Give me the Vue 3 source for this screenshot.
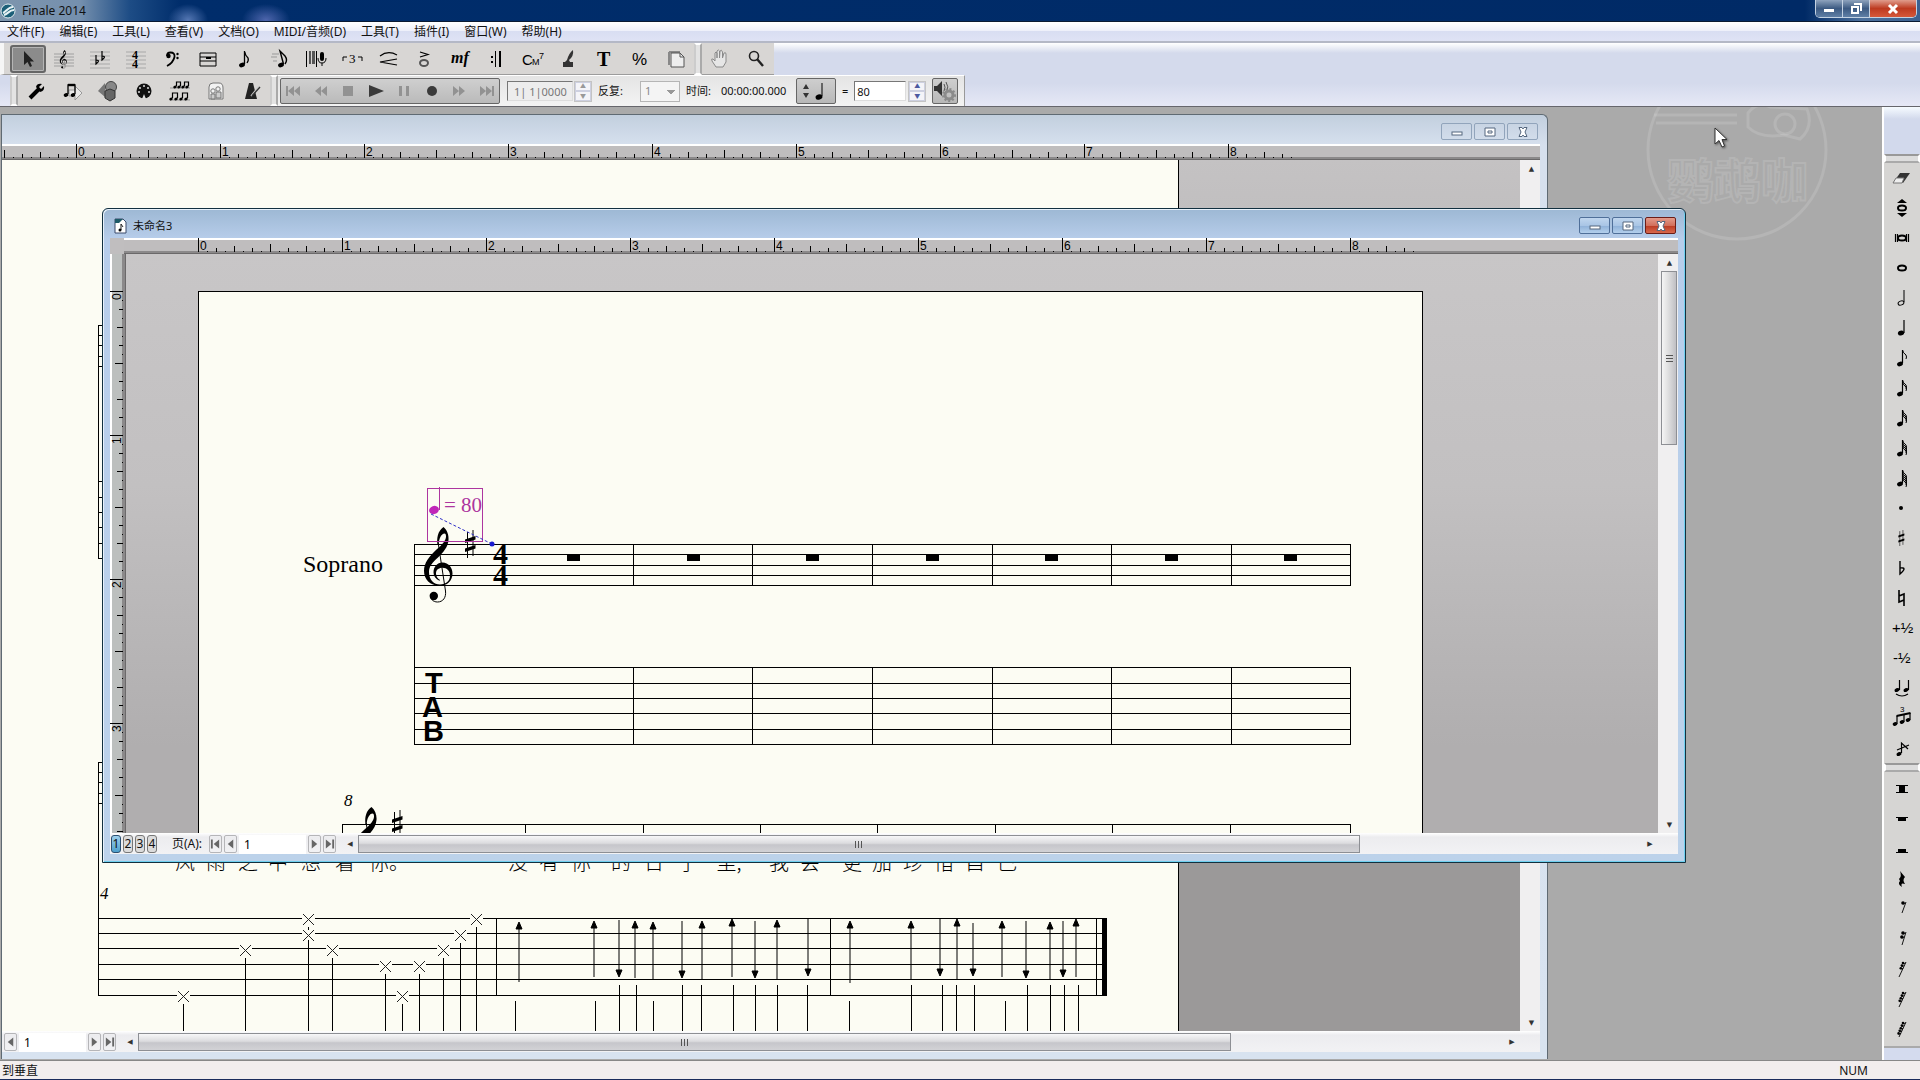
<template>
  <div class="app">
    <svg class="defs" aria-hidden="true">
      <symbol id="clef" viewBox="0 0 30 76">
        <path d="M19.5 0C23 3 25 8 24.5 13C24 20 19.500 25 14 30.500C8.500 35.500 5 39 5 45C5 53 10 57.500 16 57.500C22 57.500 26 54 26 48.500C26 44 23 40.800 18.500 40.800C14.500 40.800 12 43 12 46.500C12 49 13.500 51.500 16 53L15.500 53.800C11.500 52 9.500 49 9.500 45.500C9.500 40 13 35.500 18.500 35.500C24.500 35.500 28.500 40.500 28.500 46.500C28.500 54 23 58.800 15.500 58.800C6 58.800 0 52 0 44C0 36 5 29.500 12 23C18.500 17.500 22 13.500 22 9.500C22 7.500 21.500 6.500 20.500 6.500C17.500 6.500 14.500 12 14.800 18L13.600 18C12.500 12 13.500 4 19.500 0Z" />
        <path d="M14.200 16L21.500 64C22.300 70.500 19 75 13.500 75C9 75 6.500 72 6.500 69" fill="none" stroke="#000" stroke-width="1" />
        <circle cx="9.800" cy="69" r="4.200" />
      </symbol>
      <symbol id="sharp" viewBox="0 0 11 28">
        <path d="M2.500 2V28M8 0V26" stroke="#000" stroke-width="1" />
        <path d="M0 9.500L10.500 6V9.500L0 13ZM0 18.500L10.500 15V18.500L0 22Z" />
      </symbol>
    </svg>

    <header class="titlebar">
      <svg class="app-logo" viewBox="0 0 16 16">
        <circle cx="8" cy="8" r="7" fill="#1c5f78" stroke="#dfe9ee" />
        <path d="M3 10C6 9 8 4 13 4M4 12C8 11 9 7 14 7" stroke="#e6f2f5" stroke-width="2" fill="none" />
      </svg>
      <h1>Finale 2014</h1>
      <div class="sys-buttons">
        <button aria-label="最小化"><svg viewBox="0 0 16 12"><rect x="3" y="6" width="10" height="3" fill="#fff" /></svg></button>
        <button aria-label="还原"><svg viewBox="0 0 16 12"><path d="M6 1H13V8M4 4H10V10H4Z" fill="none" stroke="#fff" stroke-width="2" /></svg></button>
        <button class="close" aria-label="关闭"><svg viewBox="0 0 16 12"><path d="M4 2L12 10M12 2L4 10" stroke="#fff" stroke-width="3" /></svg></button>
      </div>
    </header>

    <nav class="menubar">
      <button v-for="item in menus" :key="item">{{ item }}</button>
    </nav>

    <div class="toolbars">
      <div class="toolbar-row">
        <div class="tool-panel first">
          <button
            v-for="(tool, index) in mainTools"
            :key="tool.name"
            class="tool"
            :class="{ active: index === activeTool }"
            :aria-label="tool.name"
            @click="activeTool = index"
          >
            <svg viewBox="0 0 24 24" v-html="tool.icon"></svg>
          </button>
        </div>
        <i class="grip"></i>
        <div class="tool-panel">
          <button v-for="tool in navTools" :key="tool.name" class="tool" :aria-label="tool.name">
            <svg viewBox="0 0 24 24" v-html="tool.icon"></svg>
          </button>
        </div>
      </div>
      <div class="toolbar-row second">
        <i class="grip"></i>
        <div class="tool-panel">
          <button v-for="tool in extraTools" :key="tool.name" class="tool" :aria-label="tool.name">
            <svg viewBox="0 0 24 24" v-html="tool.icon"></svg>
          </button>
        </div>
        <i class="grip"></i>
        <div class="playback">
          <div class="transport">
            <button v-for="item in transport" :key="item.name" :aria-label="item.name">
              <svg viewBox="0 0 20 16"><path :d="item.d" :fill="item.on ? '#3a3a3a' : '#929292'" /></svg>
            </button>
          </div>
          <input class="counter" aria-label="小节" value="1| 1|0000" disabled />
          <span class="spin off"><button aria-label="增加">▲</button><button aria-label="减少">▼</button></span>
          <label for="repeat">反复:</label>
          <select id="repeat" disabled><option>1</option></select>
          <span class="time-label">时间:</span>
          <output>00:00:00.000</output>
          <button class="beat" aria-label="节拍单位">
            <svg viewBox="0 0 36 22">
              <path d="M5 9L8 4L11 9ZM5 13L8 18L11 13Z" fill="#333" />
              <ellipse cx="21" cy="17" rx="3.500" ry="2.600" transform="rotate(-20 21 17)" />
              <path d="M24 3V16" stroke="#000" />
            </svg>
          </button>
          <label for="tempo">=</label>
          <input id="tempo" v-model="tempo" />
          <span class="spin"><button aria-label="加快" @click="tempo++">▲</button><button aria-label="减慢" @click="tempo--">▼</button></span>
          <button class="speaker" aria-label="播放设置">
            <svg viewBox="0 0 24 24">
              <path d="M1 7H4L9 2V17L4 12H1Z" fill="#333" />
              <path d="M11 5Q13 8 11 12M13 3Q16 8 14 12" fill="none" stroke="#555" />
              <circle cx="16" cy="16" r="4" fill="none" stroke="#8b8b8b" stroke-width="3" />
              <circle cx="16" cy="16" r="6" fill="none" stroke="#8b8b8b" stroke-width="2" stroke-dasharray="2 2" />
            </svg>
          </button>
        </div>
      </div>
    </div>

    <main class="workspace">
      <div class="desktop">
        <svg class="watermark" viewBox="0 0 190 190">
          <circle cx="95" cy="95" r="89" />
          <path d="M12 60H95M14 68H95M106 58Q115 46 128 52L165 54Q172 72 158 84L142 80Q118 84 106 72Z" />
          <circle cx="143" cy="69" r="10" />
          <text x="25" y="143">鹦鹉咖</text>
        </svg>

        <section v-for="win in windows" :key="win.id" class="doc" :class="win.id">
          <div class="doc-title">
            <template v-if="win.title">
              <svg class="doc-icon" viewBox="0 0 13 16">
                <path d="M1 1H9L12 4V15H1Z" fill="#fff" stroke="#3b4a6b" />
                <path d="M1 1H9L5 5H1Z" fill="#1d5a68" />
                <path d="M7 6V12M7 6L9 9" stroke="#222" />
                <circle cx="6" cy="12" r="1.500" />
              </svg>
              <h2>{{ win.title }}</h2>
            </template>
            <div class="doc-buttons">
              <button aria-label="最小化"><svg viewBox="0 0 16 12"><rect x="3" y="6" width="10" height="3" /></svg></button>
              <button aria-label="最大化"><svg viewBox="0 0 16 12"><path d="M3 2H13V10H3ZM6 5H10V7H6Z" /></svg></button>
              <button class="close" aria-label="关闭"><svg viewBox="0 0 16 12"><path d="M4 1.500H7L8 3L9 1.500H12L10 6L12 10.500H9L8 9L7 10.500H4L6 6Z" /></svg></button>
            </div>
          </div>

          <div class="ruler-row">
            <i v-if="win.vertical" class="corner"></i>
            <svg class="ruler">
              <g v-for="t in win.ticks" :key="t.x">
                <line :x1="t.x" :x2="t.x" :y1="14 - t.len" y2="14" />
                <text v-if="t.label !== ''" :x="t.x + 2" y="12">{{ t.label }}</text>
              </g>
            </svg>
          </div>

          <div class="doc-body">
            <svg v-if="win.vertical" class="v-ruler">
              <g v-for="t in vTicks" :key="t.y">
                <line :x1="13 - t.len" x2="13" :y1="t.y" :y2="t.y" />
                <text v-if="t.label !== ''" :transform="`translate(11 ${t.y + 9}) rotate(-90)`">{{ t.label }}</text>
              </g>
            </svg>

            <svg v-if="win.id === 'front'" class="score">
              <g transform="translate(-126 -254)">
                <rect class="paper" x="198" y="291" width="1224" height="900" />
                <g class="lines">
                  <line v-for="y in staffLines" :key="'s' + y" x1="414" x2="1351" :y1="y" :y2="y" />
                  <line v-for="y in tabLines" :key="'t' + y" x1="414" x2="1351" :y1="y" :y2="y" />
                  <line x1="414" x2="414" y1="544" y2="744" />
                  <template v-for="x in frontBars" :key="'b' + x">
                    <line :x1="x" :x2="x" y1="544" y2="585" />
                    <line :x1="x" :x2="x" y1="667" y2="744" />
                  </template>
                  <line v-for="y in staffLines" :key="'n' + y" x1="342" x2="1351" :y1="y + 280" :y2="y + 280" />
                  <line v-for="x in nextBars" :key="'m' + x" :x1="x" :x2="x" y1="824" y2="865" />
                </g>
                <rect v-for="x in wholeRests" :key="'r' + x" :x="x" y="555" width="13" height="6" />
                <use href="#clef" x="424" y="527" width="30" height="76" />
                <use href="#sharp" x="465" y="530" width="11" height="28" />
                <use href="#clef" x="352" y="807" width="30" height="76" />
                <use href="#sharp" x="392" y="810" width="11" height="28" />
                <text class="meter" x="493" y="564">4</text>
                <text class="meter" x="493" y="585">4</text>
                <text class="tab-letter" x="425" y="693">T</text>
                <text class="tab-letter" x="422" y="717">A</text>
                <text class="tab-letter" x="423" y="741">B</text>
                <text class="part" x="303" y="572">Soprano</text>
                <text class="measure" x="344" y="806">8</text>
                <g class="tempo-mark">
                  <rect x="427" y="488" width="55" height="53" />
                  <ellipse cx="434" cy="510" rx="5" ry="4" transform="rotate(-20 434 510)" />
                  <path d="M439 487V510" />
                  <text x="444" y="512">= 80</text>
                </g>
                <path class="handle" d="M431 514L492 544" />
                <circle cx="492" cy="544" r="2.500" fill="#1a1ad0" />
              </g>
            </svg>

            <svg v-else class="score">
              <g transform="translate(-2 -160)">
                <rect class="paper" x="-20" y="140" width="1198" height="1000" />
                <g class="lines">
                  <line v-for="y in hiddenLines" :key="'h' + y" x1="98" x2="120" :y1="y" :y2="y" />
                  <line x1="98" x2="98" y1="325" y2="558" />
                  <line x1="98" x2="98" y1="762" y2="996" />
                  <line v-for="y in guitarLines" :key="'g' + y" x1="98" x2="1106" :y1="y" :y2="y" />
                  <line v-for="x in [496, 830, 1096]" :key="'k' + x" :x1="x" :x2="x" y1="918" y2="996" />
                  <line v-for="(s, i) in strums" :key="'l' + i" :x1="s[4]" :x2="s[4]" :y1="s[5]" y2="1100" />
                  <line v-for="(m, i) in mutes" :key="'q' + i" :x1="m[0]" :x2="m[0]" :y1="m[1] + 8" y2="1100" />
                </g>
                <rect x="1102" y="918" width="5" height="78" />
                <g v-for="(m, i) in mutes" :key="'x' + i">
                  <rect class="gap" :x="m[0] - 6" :y="m[1] - 5" width="13" height="10" />
                  <path class="mute" :d="`M${m[0] - 5} ${m[1] - 5}l11 11m0 -11l-11 11`" />
                </g>
                <path v-for="(s, i) in strums" :key="'a' + i" class="strum" :d="strumPath(s)" />
                <g class="lyrics">
                  <text v-for="l in lyrics" :key="l[1]" :x="l[1]" y="870">{{ l[0] }}</text>
                </g>
                <text class="measure" x="100" y="899">4</text>
              </g>
            </svg>

            <div class="v-scroll">
              <button aria-label="向上">▲</button>
              <div class="track"><div v-if="win.vertical" class="thumb"><i></i><i></i><i></i></div></div>
              <button aria-label="向下">▼</button>
            </div>
          </div>

          <div class="doc-foot">
            <template v-if="win.vertical">
              <button
                v-for="n in 4"
                :key="n"
                class="layer"
                :class="{ on: n === layer }"
                @click="layer = n"
              >{{ n }}</button>
              <label :for="'page-' + win.id">页(A):</label>
              <button class="step" aria-label="第一页"><svg viewBox="0 0 12 12"><path d="M1 1H3V11H1ZM10 1V11L4 6Z" /></svg></button>
            </template>
            <button class="step" aria-label="上一页"><svg viewBox="0 0 12 12"><path d="M9 1V11L3 6Z" /></svg></button>
            <input :id="'page-' + win.id" class="page-no" aria-label="页" value="1" />
            <button class="step" aria-label="下一页"><svg viewBox="0 0 12 12"><path d="M3 1V11L9 6Z" /></svg></button>
            <button class="step" aria-label="最后一页"><svg viewBox="0 0 12 12"><path d="M9 1H11V11H9ZM2 1V11L8 6Z" /></svg></button>
            <div class="h-scroll">
              <button aria-label="向左">◀</button>
              <div class="track"><div class="thumb" :style="{ width: win.thumb + '%' }"><i></i><i></i><i></i></div></div>
              <button aria-label="向右">▶</button>
            </div>
          </div>
        </section>

        <svg class="pointer" viewBox="0 0 14 21">
          <path d="M1 1V17L5 13.500L8 20L10.500 19L8 12.500H13Z" fill="#fff" stroke="#333" />
        </svg>
      </div>

      <aside class="palette">
        <div class="palette-head"></div>
        <i class="h-grip"></i>
        <div class="palette-group">
          <button v-for="item in notePalette" :key="item.name" :aria-label="item.name">
            <svg viewBox="0 0 24 24" v-html="item.icon"></svg>
          </button>
        </div>
        <i class="h-grip"></i>
        <div class="palette-group rests">
          <button v-for="item in restPalette" :key="item.name" :aria-label="item.name">
            <svg viewBox="0 0 24 24" v-html="item.icon"></svg>
          </button>
        </div>
        <div class="palette-end"></div>
      </aside>
    </main>

    <footer class="statusbar">
      <span>到垂直</span>
      <span class="num">NUM</span>
    </footer>
  </div>
</template>

<script setup>
import { ref } from 'vue';

const activeTool = ref(0);
const tempo = ref(80);
const layer = ref(1);

const menus = ['文件(F)', '编辑(E)', '工具(L)', '查看(V)', '文档(O)', 'MIDI/音频(D)', '工具(T)', '插件(I)', '窗口(W)', '帮助(H)'];

// small builders for the icon markup
const head = (x, y, r = 3) => `<ellipse cx="${x}" cy="${y}" rx="${r}" ry="${r * 0.75}" transform="rotate(-20 ${x} ${y})"/>`;
const stroke = (d, w = 1, c = '#000') => `<path d="${d}" fill="none" stroke="${c}" stroke-width="${w}"/>`;
const fill = (d, c = '#000') => `<path d="${d}" fill="${c}"/>`;
const txt = (t, x, y, size, extra = '') => `<text x="${x}" y="${y}" font-size="${size}" font-family="Liberation Serif, serif" ${extra}>${t}</text>`;
const sans = (t, x, y, size) => `<text x="${x}" y="${y}" font-size="${size}" font-family="Liberation Sans, sans-serif">${t}</text>`;
const staff = stroke('M2 5H22M2 9H22M2 13H22M2 17H22M2 21H22', 1, '#a8a8a8');

const mainTools = [
  { name: '选择', icon: fill('M8 4V18L11.500 15L14 20L16 19L14 14.500H18Z', '#222') },
  { name: '谱表', icon: stroke('M2 7H22M2 10H22M2 13H22M2 16H22M2 19H22', 1, '#a0a0a0') + '<use href="#clef" x="7" y="3" width="9" height="19"/>' },
  { name: '调号', icon: staff + stroke('M8 8V17Q13 13 8 13M14 4V13Q19 9 14 9', 1.2) },
  { name: '拍号', icon: staff + txt('4', 8, 12, 12, 'font-weight="bold"') + txt('4', 8, 21, 12, 'font-weight="bold"') },
  { name: '谱号', icon: '<circle cx="8.500" cy="9" r="2.200"/>' + stroke('M7 9Q7 5.500 10.500 5.500Q15 5.500 14.500 10Q13 16 7 19', 1.8) + '<circle cx="17.500" cy="7" r="1.200"/><circle cx="17.500" cy="11" r="1.200"/>' },
  { name: '小节', icon: stroke('M4 6H20V19H4ZM4 10H20M4 14H20', 1) + fill('M10 10H15V12H10Z') },
  { name: '简易输入', icon: head(10, 18) + stroke('M12.500 17V4Q13 8 16 11Q17 13 15 16', 1.3) },
  { name: '快速输入', icon: stroke('M4 7H11M3 10H9M5 14H9', 1, '#999') + head(13, 18) + stroke('M15.500 17L12 4L17 9Q20 13 17 17', 1.4) },
  { name: '超级刻印', icon: fill('M2 4H3V20H2ZM5 4H7V17H5ZM8 4H11V17H8Z', '#555') + fill('M2 4H3V20H2ZM12 4H13V20H12Z') + '<rect x="16" y="5" width="4" height="9" rx="2"/>' + stroke('M14 11Q14 16 18 16T22 11M18 16V19') },
  { name: '连音', icon: stroke('M3 14V10H7M22 14V10H18') + txt('3', 9, 16, 13) },
  { name: '智能形状', icon: stroke('M4 9Q12 3 21 8M21 12L4 15L21 18', 1.2) },
  { name: '演奏记号', icon: stroke('M8 5L16 7.500L8 10', 1.2) + '<ellipse cx="12" cy="16" rx="4" ry="3" fill="none" stroke="#555" stroke-width="2"/>' },
  { name: '表情', icon: txt('mf', 3, 16, 16, 'font-style="italic" font-weight="bold"') },
  { name: '反复', icon: fill('M11 4H12V20H11ZM15 4H17V20H15ZM7 9H9V11H7ZM7 14H9V16H7Z') },
  { name: '和弦', icon: sans('C', 2, 18, 15) + sans('M', 12, 18, 9) + sans('7', 19, 12, 9) },
  { name: '歌词', icon: fill('M7 20V15H9L11 13Q13 6 17 3Q18 9 13 13L14 15H17V20Z', '#333') },
  { name: '文本', icon: txt('T', 5, 19, 20, 'font-weight="bold"') },
  { name: '缩放', icon: sans('%', 4, 18, 17) },
  { name: '页面布局', icon: stroke('M5 5H16M5 5V18', 2, '#888') + '<path d="M7 6H16L20 10V20H7Z" fill="#eee" stroke="#555"/><path d="M16 6V10H20" fill="none" stroke="#555"/>' },
];

const navTools = [
  { name: '移动', icon: '<path d="M8 20L4 14Q3 11 5 12L7 14V6Q8 4 9 6V11V4Q10.500 2 11.500 4V11L12 4Q13.500 2 14.500 5V11L16 6Q18 5 18 7L18 15L15 20Z" fill="#e6e6e6" stroke="#8a8a8a"/>' },
  { name: '放大', icon: '<circle cx="10" cy="9" r="4.500" fill="none" stroke="#222" stroke-width="1.600"/>' + stroke('M13 12L19 19', 2.4, '#222') },
];

const extraTools = [
  { name: '特殊工具', icon: stroke('M6 19L15 10', 4) + fill('M12 8Q13 4 18 5L15 8L17 10L20 7Q21 12 16 13Z') },
  { name: '音符移动', icon: '<path d="M9 11H15V7L22 14L15 21V17H9Z" fill="#e9e9e9" stroke="#999"/>' + head(6, 16, 2.4) + head(13, 16, 2.4) + stroke('M8 15V6H15V15', 1.3) + stroke('M8 6H15', 2.4) },
  { name: '图形', icon: '<path d="M2 12L9 4V18Z" fill="#777"/><circle cx="15" cy="8" r="5.500" fill="#888" stroke="#444"/><path d="M9 12L14 10L19 12V19L14 22L9 19Z" fill="#666" stroke="#333"/>' },
  { name: '调色板', icon: '<circle cx="12" cy="12" r="7.500" fill="#111"/><circle cx="8" cy="9" r="1" fill="#ddd"/><circle cx="12" cy="7" r="1" fill="#ddd"/><circle cx="16" cy="9" r="1" fill="#ddd"/><circle cx="7" cy="13" r="1" fill="#ddd"/><circle cx="17" cy="13" r="1" fill="#ddd"/><path d="M12 15L14 20H10Z" fill="#ddd"/>' },
  { name: '镜像', icon: stroke('M2 9H22M2 21H22', 1, '#999') + [[7, 8], [11, 8], [15, 8], [19, 8], [3, 20], [8, 20], [13, 20], [18, 20]].map(([x, y]) => head(x, y, 1.8)).join('') + stroke('M8.500 7V3H12.500V7M16.500 7V3H20.500V7M4.500 19V14H9.500V19M14.500 19V14H19.500V19', 1.2) },
  { name: '打击乐', icon: '<path d="M5 20V8Q5 4 9 4H15Q19 4 19 9V20Z" fill="#f2f2f2" stroke="#777"/><circle cx="9" cy="12" r="2.200" fill="none" stroke="#777"/><circle cx="14" cy="10" r="2.200" fill="none" stroke="#777"/><path d="M7 20V15H11V20ZM12 19V13H17V19Z" fill="#ccc" stroke="#777"/>' },
  { name: '节拍器', icon: fill('M9 4H13L17 20H5Z', '#222') + stroke('M11 17L19 7', 1.4, '#ccc') + stroke('M12 17L20 8', 1.4, '#333') },
];

const transport = [
  { name: '到开头', d: 'M3 3H5V13H3ZM11 3V13L5 8ZM17 3V13L11 8Z' },
  { name: '后退', d: 'M10 3V13L4 8ZM16 3V13L10 8Z' },
  { name: '停止', d: 'M5 3H15V13H5Z' },
  { name: '播放', d: 'M3 2L18 8L3 14Z', on: true },
  { name: '暂停', d: 'M5 3H8V13H5ZM12 3H15V13H12Z' },
  { name: '录音', d: 'M10 3A5 5 0 1 1 10 13A5 5 0 1 1 10 3Z', on: true },
  { name: '前进', d: 'M4 3V13L10 8ZM10 3V13L16 8Z' },
  { name: '到结尾', d: 'M3 3V13L9 8ZM9 3V13L15 8ZM15 3H17V13H15Z' },
];

// note with the given number of flags
const flagged = (n) => {
  let out = head(10, 18, 3) + stroke('M12.500 17V4', 1.2);
  for (let i = 0; i < n; i++) out += stroke(`M12.500 ${4 + i * 2}Q13 ${7 + i * 2} 16 ${9 + i * 2}Q17 ${11 + i * 2} 16 ${13 + i * 2}`, 1);
  return out;
};

const whole = '<ellipse cx="12" cy="12" rx="4" ry="2.500" fill="none" stroke="#000" stroke-width="2"/>';

const notePalette = [
  { name: '橡皮', icon: '<path d="M3 17L10 7H20L13 17Z" fill="#333"/><path d="M3 17L6 12H14L12 17Z" fill="#eee" stroke="#777"/>' },
  { name: '重新定位', icon: whole + fill('M7 7L12 3L17 7ZM7 17L12 21L17 17Z') },
  { name: '倍全音符', icon: whole + stroke('M5.500 8V16M7.500 8V16M16.500 8V16M18.500 8V16', 1.2) },
  { name: '全音符', icon: whole },
  { name: '二分音符', icon: '<ellipse cx="11" cy="17" rx="3" ry="2" fill="none" stroke="#000" transform="rotate(-20 11 17)"/>' + stroke('M14 16V4') },
  { name: '四分音符', icon: head(11, 17, 3.2) + stroke('M14 17V4', 1.2) },
  { name: '八分音符', icon: flagged(1) },
  { name: '十六分音符', icon: flagged(2) },
  { name: '三十二分音符', icon: flagged(3) },
  { name: '六十四分音符', icon: flagged(4) },
  { name: '一百二十八分音符', icon: flagged(5) },
  { name: '附点', icon: '<circle cx="11" cy="12" r="2"/>' },
  { name: '升号', icon: '<use href="#sharp" x="7" y="4" width="9" height="16"/>' },
  { name: '降号', icon: stroke('M10 5V18Q18 11 10 12', 1.4) },
  { name: '还原号', icon: stroke('M9 4V16L14 14M14 20V8L9 10', 1.6) },
  { name: '升半音', icon: sans('+½', 2, 17, 15) },
  { name: '降半音', icon: sans('-½', 3, 17, 15) },
  { name: '连音线', icon: head(7, 14, 2.6) + head(16, 14, 2.6) + stroke('M9.500 14V4M18.500 14V4M6 18Q12 22 18 18', 1.2) },
  { name: '三连音', icon: head(5, 18, 2.4) + head(12, 16, 2.4) + head(18, 14, 2.4) + stroke('M7 18V10M14 16V9M20 14V7', 1.2) + stroke('M6.500 10L20.500 7', 2) + sans('3', 10, 6, 8) },
  { name: '倚音', icon: head(9, 18, 2.6) + stroke('M11.500 17V7L18 13M7 14L19 9', 1.2) },
];

const rest = (n) => {
  const gap = n > 2 ? 2.6 : 4;
  const r = n > 2 ? 1.3 : 1.8;
  let out = stroke(`M16 5L${n > 2 ? 9 : 12} ${14 + Math.min(n, 3) * 2}`, 0.9);
  for (let i = 0; i < n; i++) {
    const x = 13 - i * 1.1;
    out += `<circle cx="${x}" cy="${6 + i * gap}" r="${r}"/>` + stroke(`M${x} ${7 + i * gap}L${x + 2.5} ${6 + i * gap}`, 0.8);
  }
  return out;
};

const restPalette = [
  { name: '倍全休止符', icon: fill('M6 8H18V9H6ZM6 15H18V16H6ZM9 9H15V15H9Z') },
  { name: '全休止符', icon: fill('M6 10H18V11H6ZM8 11H16V14H8Z') },
  { name: '二分休止符', icon: fill('M6 15H18V16H6ZM8 12H16V15H8Z') },
  { name: '四分休止符', icon: fill('M10 4L15 10Q12 13 15 17Q10 15 12 20Q7 17 10 14L9 12Q12 9 10 4Z') },
  { name: '八分休止符', icon: rest(1) },
  { name: '十六分休止符', icon: rest(2) },
  { name: '三十二分休止符', icon: rest(3) },
  { name: '六十四分休止符', icon: rest(4) },
  { name: '一百二十八分休止符', icon: rest(5) },
];

// one inch is 144px, divided into sixteenths
const tickLength = (i) => {
  if (i % 16 === 0) return 14;
  if (i % 8 === 0) return 8;
  if (i % 4 === 0) return 6;
  return i % 2 === 0 ? 4 : 1;
};

const makeTicks = (zero, from, to) => {
  const out = [];
  for (let i = from; i <= to; i++) {
    out.push({ x: zero + i * 9, len: tickLength(i), label: i % 16 === 0 ? i / 16 : '' });
  }
  return out;
};

const vTicks = makeTicks(37, 0, 60).map((t) => ({ y: t.x, len: t.len, label: t.label }));

const windows = [
  { id: 'back', title: '', vertical: false, thumb: 80, ticks: makeTicks(74, -8, 135) },
  { id: 'front', title: '未命名3', vertical: true, thumb: 78, ticks: makeTicks(74, 0, 135) },
];

const staffLines = [544, 554, 565, 575, 585];
const tabLines = [667, 683, 698, 713, 729, 744];
const frontBars = [633, 752, 872, 992, 1111, 1231, 1350];
const nextBars = [342, 525, 643, 760, 877, 995, 1112, 1230, 1350];
const wholeRests = [567, 687, 806, 926, 1045, 1165, 1284];

const hiddenLines = [325, 335, 345, 356, 366, 481, 497, 512, 527, 543, 558, 762, 772, 782, 793, 803];
const guitarLines = [918, 933, 948, 964, 979, 995];

const mutes = [
  [183, 996], [245, 950], [308, 919], [308, 935], [332, 950], [385, 966],
  [402, 996], [419, 966], [443, 950], [460, 935], [476, 919],
];

// [direction, x, top, bottom, stem x, stem top]
const strums = [
  ['up', 519, 921, 982, 515, 1001],
  ['up', 594, 920, 977, 595, 1001],
  ['down', 619, 920, 978, 619, 985],
  ['up', 635, 920, 978, 636, 985],
  ['up', 653, 921, 979, 653, 1001],
  ['down', 682, 921, 979, 682, 985],
  ['up', 702, 920, 979, 701, 985],
  ['up', 732, 918, 977, 733, 985],
  ['down', 755, 921, 979, 755, 985],
  ['up', 777, 919, 979, 777, 985],
  ['down', 808, 919, 977, 807, 985],
  ['up', 850, 920, 983, 849, 1001],
  ['up', 911, 920, 979, 911, 985],
  ['down', 940, 919, 977, 942, 985],
  ['up', 957, 918, 979, 956, 985],
  ['down', 973, 923, 977, 974, 985],
  ['up', 1002, 920, 977, 1005, 1001],
  ['down', 1026, 921, 979, 1027, 985],
  ['up', 1050, 921, 979, 1050, 985],
  ['down', 1063, 921, 978, 1064, 985],
  ['up', 1076, 918, 977, 1078, 985],
];

const strumPath = ([dir, x, top, bottom]) => {
  if (dir === 'up') return `M${x} ${bottom}V${top + 6}M${x - 3} ${top + 8}H${x + 3}L${x} ${top + 1}Z`;
  return `M${x} ${top}V${bottom - 6}M${x - 3} ${bottom - 8}H${x + 3}L${x} ${bottom - 1}Z`;
};

const lyrics = [
  ['风', 185], ['雨', 216], ['之', 248], ['中', 278], ['想', 311], ['着', 345], ['你。', 389],
  ['没', 518], ['有', 549], ['你', 581], ['的', 621], ['日', 654], ['子', 688], ['里,', 729],
  ['我', 779], ['会', 810], ['更', 852], ['加', 882], ['珍', 913], ['惜', 944], ['自', 975], ['己', 1007],
];
</script>

<style>
body {
  margin: 0;
}
</style>

<style scoped>
.app {
  height: 100vh;
  display: flex;
  flex-direction: column;
  overflow: hidden;
  font: 12px/16px "Noto Sans", "Noto Sans CJK SC", sans-serif;
  color: #111;
  background: #ababab;
}

.app *,
.app {
  box-sizing: border-box;
}

.defs {
  position: absolute;
  width: 0;
  height: 0;
}

button {
  display: flex;
  align-items: center;
  justify-content: center;
  padding: 0;
  border: 0;
  background: none;
  font: inherit;
  color: inherit;
}

h1,
h2 {
  margin: 0;
  font-size: 12px;
  font-weight: 400;
}

/* title bar */
.titlebar {
  flex: none;
  height: 22px;
  display: flex;
  align-items: center;
  gap: 6px;
  background:
    radial-gradient(ellipse 20px 16px at 188px 20px, rgba(120, 150, 210, 0.7), transparent),
    radial-gradient(ellipse 24px 16px at 266px 20px, rgba(110, 125, 200, 0.7), transparent),
    linear-gradient(90deg, #7d95ad 0, #7590ae 80px, #1d4c85 130px, #002d6b 180px, #002a66 94%, #4d719d 97%, #3a6090 100%);
  border-bottom: 1px solid #0a1a33;
}

.app-logo {
  width: 16px;
  height: 16px;
}

.sys-buttons {
  display: flex;
  align-self: flex-start;
  margin-left: auto;
  margin-right: 3px;
  border: 1px solid #c4d2e2;
  border-top: 0;
  border-radius: 0 0 5px 5px;
  overflow: hidden;
}

.sys-buttons button {
  width: 27px;
  height: 17px;
  background: linear-gradient(#8ea3bd, #3c5a82 50%, #5f7fa6);
  border-right: 1px solid #c4d2e2;
}

.sys-buttons .close {
  width: 46px;
  border: 0;
  background: linear-gradient(#e09c8c, #bd3a20 50%, #d6583a);
}

.sys-buttons svg {
  width: 16px;
  height: 12px;
}

/* menu */
.menubar {
  flex: none;
  height: 21px;
  display: flex;
  gap: 1px;
  background: linear-gradient(#fff, #eef0fa 45%, #d9def2 50%, #dfe3f5);
  border-bottom: 2px solid #b4b8c6;
}

.menubar button {
  padding: 0 7px;
}

/* toolbars */
.toolbars {
  flex: none;
  background: linear-gradient(#fff, #d4daec 10px, #d4daec 40px, #e6e8f6);
  border-bottom: 1px solid #66666c;
}

.toolbar-row {
  height: 32px;
  display: flex;
}

.toolbar-row.second {
  height: 31px;
  padding-left: 10px;
}

.grip {
  width: 8px;
  border: 2px solid #fff;
  border-right-color: #aaa;
  border-left-color: #ccc;
  background: #e3e3e3;
}

.tool-panel {
  display: flex;
  align-items: center;
  background: #d8d6d4;
  border-bottom: 1px solid #9c9c9c;
}

.tool-panel.first {
  padding-left: 6px;
  border-left: 4px solid #f6f6f6;
}

.second .tool-panel {
  border-bottom: 0;
}

.tool {
  width: 36px;
  height: 28px;
}

.tool svg {
  width: 24px;
  height: 24px;
}

.tool.active {
  background: #8b8b8b;
  border: 2px solid #666;
  border-radius: 3px;
  box-shadow: inset 0 0 0 1px #b5b5b5;
}

.playback {
  display: flex;
  align-items: center;
  padding: 0 6px 0 2px;
  font-size: 11px;
  background: linear-gradient(#e4e4e4, #f3f3f3);
  border-top: 1px solid #fff;
  border-right: 1px solid #999;
}

.transport {
  display: flex;
  align-items: center;
  justify-content: space-between;
  width: 220px;
  height: 26px;
  padding: 0 2px;
  border: 1px solid #666;
  border-radius: 2px;
  background: linear-gradient(#cfcfcf, #bababa);
}

.transport svg {
  width: 20px;
  height: 16px;
}

.playback input {
  height: 20px;
  padding: 0 2px;
  border: 1px solid #777;
  border-right-color: #ddd;
  border-bottom-color: #ddd;
  font: inherit;
  color: #111;
  background: #fff;
}

.playback .counter {
  width: 66px;
  margin: 0 1px 0 7px;
  padding-left: 6px;
  color: #777;
  background: #ededed;
}

.spin {
  width: 18px;
  height: 21px;
  display: flex;
  flex-direction: column;
  border: 1px solid #c4c4c4;
}

.spin button {
  flex: 1;
  font-size: 6px;
  line-height: 6px;
  color: #4d5aa0;
  background: #f4f4f8;
  border: 1px solid #cdd0e0;
}

.spin.off button {
  color: #999;
}

.playback label,
.time-label {
  margin: 0 5px 0 6px;
}

#repeat {
  width: 40px;
  height: 21px;
  margin-left: 12px;
  padding: 0 4px;
  appearance: none;
  border: 1px solid #b5b5b5;
  border-radius: 0;
  font: inherit;
  color: #888;
  opacity: 1;
  background: linear-gradient(#999, #999) 26px 8px / 8px 1px no-repeat, linear-gradient(#999, #999) 27px 9px / 6px 1px no-repeat, linear-gradient(#999, #999) 28px 10px / 4px 1px no-repeat, linear-gradient(#999, #999) 29px 11px / 2px 1px no-repeat, #f4f4f4;
}

output {
  width: 69px;
  margin-left: 5px;
}

.beat,
.speaker {
  width: 40px;
  height: 26px;
  margin-left: 6px;
  border: 1px solid #666;
  border-radius: 2px;
  background: linear-gradient(#cecece, #b8b8b8);
}

.speaker {
  width: 26px;
}

.beat svg {
  width: 36px;
  height: 22px;
}

.speaker svg {
  width: 24px;
  height: 24px;
}

.playback #tempo {
  width: 52px;
  margin: 0 2px 0 1px;
}

/* workspace */
.workspace {
  flex: 1;
  min-height: 0;
  display: flex;
}

.desktop {
  flex: 1;
  position: relative;
  overflow: hidden;
  background: #aaaaaa;
}

.watermark {
  position: absolute;
  top: -52px;
  right: 50px;
  width: 190px;
  height: 190px;
  fill: none;
  stroke: rgba(255, 255, 255, 0.13);
  stroke-width: 3;
}

.watermark text {
  font: 700 47px "Noto Sans CJK SC", sans-serif;
  stroke-width: 2;
}

.doc {
  position: absolute;
  display: flex;
  flex-direction: column;
}

.doc.back {
  inset: 7px 334px 1px 1px;
  padding: 0 7px 7px 0;
  border: 1px solid #5f6a73;
  border-bottom: 0;
  border-radius: 0 6px 0 0;
  background: linear-gradient(#c2cfde, #d6e0ee 30px, #d8e3f0);
}

.doc.front {
  inset: 101px 196px 197px 102px;
  padding: 0 7px 8px;
  border: 1px solid #12303f;
  border-radius: 6px 6px 0 0;
  background: linear-gradient(#9db8d4, #b7cdea 30px, #bcd2ea);
  box-shadow: inset 1px 1px 0 #e8f2fb, inset -1px -1px 0 #6fd0f0;
}

.doc-title {
  flex: none;
  height: 29px;
  display: flex;
  align-items: center;
  gap: 6px;
  padding-top: 4px;
  padding-left: 4px;
}

.doc-icon {
  width: 13px;
  height: 16px;
}

.doc-title h2 {
  font-size: 11px;
}

.doc-buttons {
  display: flex;
  gap: 2px;
  margin-left: auto;
  padding-right: 2px;
}

.doc-buttons button {
  width: 31px;
  height: 17px;
  border: 1px solid #91a4bb;
  border-radius: 2px;
}

.doc-buttons svg {
  width: 16px;
  height: 12px;
  fill: #fff;
  stroke: #55677e;
}

.front .doc-buttons button {
  border-color: #4f6f99;
  background: linear-gradient(#c0d6ee, #a9c5e5 50%, #8fb1d8 52%, #b3cfec);
}

.front .doc-buttons .close {
  border-color: #6b1d17;
  background: linear-gradient(#e39a8a, #d2705c 50%, #bb3a22 52%, #d8694d);
}

.ruler-row {
  flex: none;
  height: 16px;
  display: flex;
}

.corner {
  width: 14px;
  background: #c0bebf;
}

.ruler {
  flex: 1;
  min-width: 0;
  height: 16px;
  background: linear-gradient(#fff 2px, #bfbdbe 2px, #bfbdbe 13px, #8b898a 13px, #8b898a 15px, #6b696a 15px);
}

.ruler line,
.v-ruler line,
.lines line {
  stroke: #000;
  stroke-width: 1;
  shape-rendering: crispEdges;
}

.ruler text,
.v-ruler text {
  font: 12px "Liberation Sans", sans-serif;
}

.doc-body {
  flex: 1;
  min-height: 0;
  display: flex;
}

.v-ruler {
  flex: none;
  width: 16px;
  height: 100%;
  background: linear-gradient(90deg, #fff 2px, #bcbfbe 2px, #bcbfbe 12px, #8b898a 12px, #8b898a 15px, #6b696a 15px);
}

.score {
  flex: 1;
  min-width: 0;
  height: 100%;
  background: linear-gradient(#c8c6c7, #c2c0c1 40%, #b0aeaf 85%);
}

.back .score {
  background: linear-gradient(#c4c2c3, #9b9999 80%);
}

.paper {
  fill: #fcfcf3;
  stroke: #000;
  shape-rendering: crispEdges;
}

.gap {
  fill: #fcfcf3;
}

.meter {
  font: 700 30px "Liberation Serif", serif;
}

.tab-letter {
  font: 700 29px "Liberation Sans", sans-serif;
}

.part {
  font: 24px "Liberation Serif", serif;
}

.measure {
  font: italic 17px "Liberation Serif", serif;
}

.tempo-mark {
  fill: #c026b8;
}

.tempo-mark text {
  font: 21px "Liberation Serif", serif;
  fill: #ad359f;
}

.tempo-mark rect,
.tempo-mark path {
  fill: none;
  stroke: #ad359f;
  shape-rendering: crispEdges;
}

.handle {
  stroke: #3030c8;
  stroke-dasharray: 3 2;
}

.mute {
  fill: none;
  stroke: #222;
}

.strum {
  fill: #000;
  stroke: #000;
}

.lyrics text {
  font: 300 20px "Noto Sans CJK SC", sans-serif;
  text-anchor: middle;
}

.v-scroll {
  flex: none;
  width: 20px;
  display: flex;
  flex-direction: column;
  padding-left: 3px;
  background: #f0eff0;
}

.v-scroll button,
.h-scroll button {
  height: 17px;
  font: 7px "DejaVu Sans", sans-serif;
  color: #333;
}

.v-scroll .track {
  flex: 1;
}

.v-scroll .thumb {
  display: flex;
  flex-direction: column;
  align-items: center;
  justify-content: center;
  gap: 2px;
  width: 16px;
  height: 32%;
  border: 1px solid #8d8f94;
  background: linear-gradient(90deg, #f5f5f5, #dcdcdd 50%, #bfbfc3);
}

.doc-foot {
  flex: none;
  height: 21px;
  display: flex;
  align-items: center;
  gap: 2px;
  padding-top: 1px;
  background: linear-gradient(#fff, #ececef 4px, #f2f2f4);
}

.front .doc-foot {
  padding-left: 1px;
}

.back .doc-foot {
  padding-left: 2px;
}

.layer {
  width: 10px;
  height: 18px;
  border: 1px solid #777;
  border-radius: 3px;
  background: #dcdcdc;
}

.layer.on {
  border-color: #2b4f70;
  background: linear-gradient(#9fd0ec, #4d9fcb);
}

.doc-foot label {
  width: 48px;
  padding-left: 13px;
  white-space: nowrap;
}

.step {
  width: 13px;
  height: 18px;
  border: 1px solid #b5b5b8;
  border-radius: 2px;
}

.step svg {
  width: 11px;
  height: 12px;
  fill: #666;
}

.page-no {
  width: 67px;
  height: 19px;
  padding: 0 5px;
  border: 0;
  font: inherit;
  background: #fff;
}

.h-scroll {
  flex: 1;
  display: flex;
  align-items: center;
  height: 18px;
  margin-left: 4px;
  padding-right: 20px;
}

.h-scroll button {
  width: 16px;
}

.h-scroll .track {
  flex: 1;
}

.h-scroll .thumb {
  display: flex;
  align-items: center;
  justify-content: center;
  gap: 2px;
  height: 18px;
  border: 1px solid #8d8f94;
  background: linear-gradient(#f7f7f8, #dcdcdf 45%, #c6c6cb 55%, #d2d2d6);
}

.h-scroll .thumb i {
  width: 1px;
  height: 7px;
  background: #555;
}

.v-scroll .thumb i {
  width: 7px;
  height: 1px;
  background: #555;
}

.pointer {
  position: absolute;
  top: 20px;
  right: 154px;
  width: 14px;
  height: 21px;
  filter: drop-shadow(1px 1px 1px rgba(0, 0, 0, 0.5));
}

/* note palettes */
.palette {
  flex: none;
  width: 38px;
  display: flex;
  flex-direction: column;
  border-left: 2px solid #fff;
  background: #d6d5d3;
}

.palette-head {
  height: 47px;
  background: linear-gradient(#f6fbff, #d2d9ec 12px);
}

.h-grip {
  height: 9px;
  border: 2px solid #fff;
  border-top-color: #999;
  border-bottom-color: #aaa;
  background: #ddd;
}

.palette-group {
  display: flex;
  flex-direction: column;
}

.palette-group button {
  height: 30px;
}

.palette-group.rests {
  flex: 1;
  padding-top: 2px;
}

.palette-group svg {
  width: 24px;
  height: 24px;
}

.palette-end {
  height: 14px;
  border-top: 2px solid #aaa;
  background: #d4dbee;
}

.statusbar {
  flex: none;
  height: 20px;
  display: flex;
  justify-content: space-between;
  padding: 2px 50px 0 2px;
  border-top: 1px solid #888;
  border-bottom: 1px solid #1b2c5c;
  background: #f2eeee;
}

.num {
  padding-right: 2px;
}
</style>
